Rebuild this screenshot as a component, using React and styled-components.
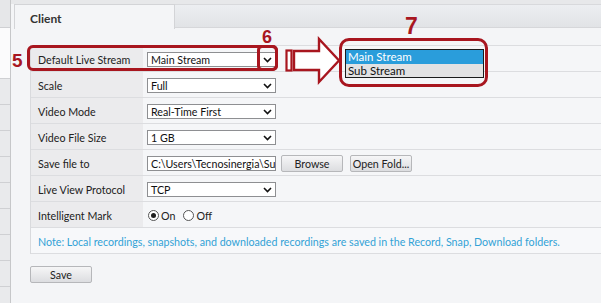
import styled, { createGlobalStyle } from "styled-components";

const GlobalStyle = createGlobalStyle`
  html, body {
    margin: 0;
    padding: 0;
  }
  body {
    width: 601px;
    height: 303px;
    overflow: hidden;
    background: #f4f5f7;
    font-family: Lato, "Liberation Sans", sans-serif;
    color: #222;
  }
  * {
    box-sizing: border-box;
  }
`;

const annot = "#a8161f";

const Page = styled.div`
  position: relative;
  display: flex;
  width: 601px;
  height: 303px;
  overflow: hidden;
  background: #f4f5f7;
`;

const Sidebar = styled.div`
  width: 11px;
  flex-shrink: 0;
  display: flex;
  flex-direction: column;
  padding-top: 27px;
  background: #e6e7e9;
  border-right: 1px solid #c6c7c9;
`;

const SideItem = styled.div`
  height: ${(p) => p.$h || 26}px;
  flex-shrink: 0;
  background: ${(p) => (p.$active ? "#fbfbfc" : "#e9eaec")};
  border-top: 1px solid #cfd0d3;
`;

const Main = styled.div`
  flex: 1;
  display: flex;
  flex-direction: column;
  padding-left: 3px;
  border-top: 4px solid #e7e8ea;
`;

const TabBar = styled.div`
  height: 24px;
  display: flex;
  background: linear-gradient(#eceef1, #e1e3e6);
  border-top: 1px solid #d8d9dc;
`;

const Tab = styled.div`
  width: 161px;
  height: 25px;
  margin-top: -1px;
  padding: 6px 0 0 15px;
  background: #f4f5f7;
  border: 1px solid #d3d4d7;
  border-bottom: none;
  font-size: 12px;
  font-weight: 700;
  color: #333;
`;

const TabRest = styled.div`
  flex: 1;
  border-bottom: 1px solid #d6d7da;
`;

const Content = styled.div`
  padding: 17px 0 0 16px;
  display: flex;
  flex-direction: column;
  align-items: flex-start;
`;

const Table = styled.div`
  width: 100%;
  display: flex;
  flex-direction: column;
  border-top: 1px solid #dcdde0;
  border-left: 1px solid #d9dadd;
`;

const Row = styled.div`
  display: flex;
  height: 26px;
  border-bottom: 1px solid #dcdde0;
`;

const Label = styled.div`
  width: 112px;
  flex-shrink: 0;
  display: flex;
  align-items: center;
  padding: 2px 0 0 7px;
  background: #ebebed;
  font-size: 10.7px;
  color: #222;
  white-space: nowrap;
`;

const Value = styled.div`
  flex: 1;
  display: flex;
  align-items: center;
  padding: 1px 0 0 4px;
  background: #f5f6f8;
  font-size: 10.7px;
`;

const SelectBox = styled.div`
  position: relative;
  width: 129px;
  height: 15px;
  display: flex;
  align-items: center;
  padding-left: 3px;
  background: #fff;
  border: 1px solid #8e8f92;
  font-size: 10.7px;
  color: #111;
  white-space: nowrap;
  overflow: hidden;
`;

const Chevron = styled.svg`
  position: absolute;
  right: 3px;
  top: 4px;
`;

const Button = styled.div`
  width: 62px;
  height: 17px;
  margin-left: ${(p) => p.$gap || 0}px;
  display: flex;
  align-items: center;
  justify-content: center;
  background: linear-gradient(#f6f6f7, #dcdde0);
  border: 1px solid #b6b7ba;
  border-radius: 2px;
  font-size: 10.7px;
  color: #222;
  white-space: nowrap;
`;

const Radio = styled.span`
  width: 11px;
  height: 11px;
  margin: 0 2px 0 ${(p) => p.$gap || 0}px;
  display: inline-flex;
  align-items: center;
  justify-content: center;
  border: 1px solid #555;
  border-radius: 50%;
  background: #fff;

  &::after {
    content: "";
    width: 5px;
    height: 5px;
    border-radius: 50%;
    background: ${(p) => (p.$checked ? "#1e1e1e" : "transparent")};
  }
`;

const NoteRow = styled.div`
  height: 26px;
  display: flex;
  align-items: center;
  padding: 1px 0 0 7px;
  background: #f7f8fa;
  border-bottom: 1px solid #dcdde0;
  font-size: 10.7px;
  color: #32a2d6;
  white-space: nowrap;
`;

const SaveButton = styled(Button)`
  margin-top: 12px;
`;

/* annotations drawn over the screenshot */
const Num = styled.span`
  position: absolute;
  left: ${(p) => p.$x}px;
  top: ${(p) => p.$y}px;
  font-family: "Liberation Sans", Arial, sans-serif;
  font-weight: 700;
  font-size: ${(p) => p.$size}px;
  line-height: 1;
  color: ${annot};
`;

const Ring = styled.div`
  position: absolute;
  left: ${(p) => p.$x}px;
  top: ${(p) => p.$y}px;
  width: ${(p) => p.$w}px;
  height: ${(p) => p.$h}px;
  border: ${(p) => p.$b || 3}px solid ${annot};
  border-radius: ${(p) => p.$r || 6}px;
`;

const Arrow = styled.svg`
  position: absolute;
  left: 284px;
  top: 36px;
`;

const ListBox = styled.div`
  position: absolute;
  left: 345px;
  top: 49px;
  width: 139px;
  height: 29px;
  display: flex;
  flex-direction: column;
  border: 1px solid #1b1b1b;
  background: #e2e2e3;
  font-size: 11.5px;
`;

const ListItem = styled.div`
  height: 13.5px;
  line-height: 13.5px;
  padding-left: 2px;
  background: ${(p) => (p.$selected ? "#2a9ddb" : "#e2e2e3")};
  color: ${(p) => (p.$selected ? "#fff" : "#111")};
`;

const Select = ({ children }) => (
  <SelectBox>
    {children}
    <Chevron width="9" height="6" viewBox="0 0 9 6">
      <path d="M1 1 L4.5 4.5 L8 1" fill="none" stroke="#111" strokeWidth="1.6" />
    </Chevron>
  </SelectBox>
);

export default function App() {
  return (
    <>
      <GlobalStyle />
      <Page>
        <Sidebar>
          <SideItem $active $h={51} />
          <SideItem />
          <SideItem />
          <SideItem />
          <SideItem />
          <SideItem />
          <SideItem />
          <SideItem />
          <SideItem />
          <SideItem />
        </Sidebar>
        <Main>
          <TabBar>
            <Tab>Client</Tab>
            <TabRest />
          </TabBar>
          <Content>
            <Table>
              <Row>
                <Label>Default Live Stream</Label>
                <Value>
                  <Select>Main Stream</Select>
                </Value>
              </Row>
              <Row>
                <Label>Scale</Label>
                <Value>
                  <Select>Full</Select>
                </Value>
              </Row>
              <Row>
                <Label>Video Mode</Label>
                <Value>
                  <Select>Real-Time First</Select>
                </Value>
              </Row>
              <Row>
                <Label>Video File Size</Label>
                <Value>
                  <Select>1 GB</Select>
                </Value>
              </Row>
              <Row>
                <Label>Save file to</Label>
                <Value>
                  <SelectBox>C:\Users\Tecnosinergia\Su</SelectBox>
                  <Button $gap={5}>Browse</Button>
                  <Button $gap={7}>Open Fold...</Button>
                </Value>
              </Row>
              <Row>
                <Label>Live View Protocol</Label>
                <Value>
                  <Select>TCP</Select>
                </Value>
              </Row>
              <Row>
                <Label>Intelligent Mark</Label>
                <Value>
                  <Radio $checked $gap={1} />
                  On
                  <Radio $gap={8} />
                  Off
                </Value>
              </Row>
              <NoteRow>
                Note: Local recordings, snapshots, and downloaded recordings are saved in the Record, Snap, Download folders.
              </NoteRow>
            </Table>
            <SaveButton>Save</SaveButton>
          </Content>
        </Main>

        <Num $x={12} $y={51} $size={19}>5</Num>
        <Ring $x={27} $y={45} $w={251} $h={26} />
        <Num $x={262} $y={28} $size={18}>6</Num>
        <Ring $x={257} $y={45} $w={21} $h={26} $r={5} />
        <Arrow width="58" height="50" viewBox="0 0 58 50">
          <rect x="2.5" y="14.5" width="5" height="20" fill="#fff" stroke={annot} strokeWidth="2.2" />
          <path
            d="M10 15 L35 15 L35 3 L55 24.5 L35 46 L35 34 L10 34 Z"
            fill="#fff"
            stroke={annot}
            strokeWidth="2.4"
            strokeLinejoin="miter"
          />
        </Arrow>
        <Num $x={405} $y={15} $size={23}>7</Num>
        <ListBox>
          <ListItem $selected>Main Stream</ListItem>
          <ListItem>Sub Stream</ListItem>
        </ListBox>
        <Ring $x={339} $y={38} $w={149} $h={49} $b={3.5} $r={10} />
      </Page>
    </>
  );
}
